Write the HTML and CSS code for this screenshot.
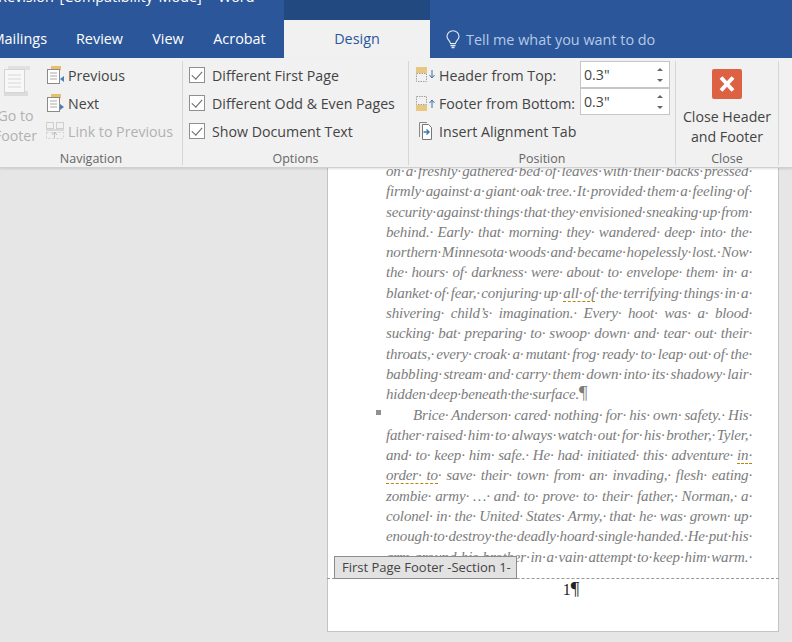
FILE: index.html
```html
<!DOCTYPE html>
<html lang="en">
<head>
    <meta charset="UTF-8">
    <title>Header and Footer Tools</title>
    <link rel="stylesheet" href="styles.css">
</head>
<body>
    <div class="titlebar">
        <div class="doc-title">Revision [Compatibility Mode] - Word</div>
        <div class="tool-title"><span>Header &amp; Footer Tools</span></div>
    </div>

    <div class="tabs">
        <div class="tab mailings">Mailings</div>
        <div class="tab review">Review</div>
        <div class="tab view">View</div>
        <div class="tab acrobat">Acrobat</div>
        <div class="tab design">Design</div>
        <div class="tell-me">
            <svg width="16" height="19" viewBox="0 0 16 19" fill="none" stroke="#e4ebf5" stroke-width="1.1">
                <path d="M5.5 13.5 C5 10.5 2 9.5 2 6.5 A6 5.8 0 0 1 14 6.5 C14 9.5 11 10.5 10.5 13.5 Z"/>
                <path d="M5.5 15.5 H10.5 M6.5 17.5 H9.5" stroke-width="1.4"/>
            </svg>
            <span>Tell me what you want to do</span>
        </div>
    </div>

    <div class="ribbon">
        <div class="group nav-group">
            <div class="group-body nav-body">
                <div class="big-btn off">
                    <svg width="34" height="36" viewBox="0 0 34 36" fill="none">
                        <rect x="9" y="2" width="22" height="4" fill="#e0e0e0"/>
                        <rect x="5" y="27" width="24" height="5" fill="#dcdcdc"/>
                        <rect x="5.5" y="5.5" width="20" height="23" fill="#f8f8f8" stroke="#d4d4d4"/>
                        <path d="M9 11H22M9 15H22M9 19H22M9 23H22" stroke="#d8d8d8"/>
                    </svg>
                    <span>Go to<br>Footer</span>
                </div>
                <div class="nav-list">
                    <div class="nav-item">
                        <svg width="18" height="20" viewBox="0 0 18 20" fill="none">
                            <rect x="5" y="1" width="10" height="4" fill="#e8bf6a"/>
                            <rect x="1.5" y="4.5" width="12" height="14" fill="#fff" stroke="#8a8a8a"/>
                            <path d="M4 8H11M4 11H11M4 14H11" stroke="#a8a8a8"/>
                            <path d="M18 11V17L14 14Z" fill="#4a7fb5"/>
                        </svg>
                        <span>Previous</span>
                    </div>
                    <div class="nav-item">
                        <svg width="18" height="20" viewBox="0 0 18 20" fill="none">
                            <rect x="5" y="1" width="10" height="4" fill="#e8bf6a"/>
                            <rect x="1.5" y="4.5" width="12" height="14" fill="#fff" stroke="#8a8a8a"/>
                            <path d="M4 8H11M4 11H11M4 14H11" stroke="#a8a8a8"/>
                            <path d="M14 11V17L18 14Z" fill="#4a7fb5"/>
                        </svg>
                        <span>Next</span>
                    </div>
                    <div class="nav-item off">
                        <svg width="18" height="20" viewBox="0 0 18 20" fill="none" stroke="#cfcfcf">
                            <rect x="0.5" y="1.5" width="7" height="6"/>
                            <rect x="10.5" y="1.5" width="7" height="6"/>
                            <path d="M0 9H18" stroke-width="2" stroke="#d8d8d8"/>
                            <rect x="0.5" y="11.5" width="17" height="6" stroke-dasharray="2 2"/>
                            <path d="M6 14L8.5 11L11 14M8.5 11V17" stroke="#bdbdbd"/>
                        </svg>
                        <span>Link to Previous</span>
                    </div>
                </div>
            </div>
            <div class="group-name">Navigation</div>
        </div>

        <div class="group options-group">
            <div class="group-body options-body">
                <label class="check"><span class="box"></span>Different First Page</label>
                <label class="check"><span class="box"></span>Different Odd &amp; Even Pages</label>
                <label class="check"><span class="box"></span>Show Document Text</label>
            </div>
            <div class="group-name">Options</div>
        </div>

        <div class="group position-group">
            <div class="group-body position-body">
                <div class="pos-labels">
                    <div class="pos-item">
                        <svg width="20" height="16" viewBox="0 0 20 16" fill="none">
                            <rect x="0" y="0" width="11" height="6" fill="#e8c77f"/>
                            <rect x="0.5" y="6.5" width="10" height="8" stroke="#a0a0a0" stroke-dasharray="1.5 1"/>
                            <path d="M16 3V10M13.5 8L16 11L18.5 8" stroke="#3f6f9f"/>
                        </svg>
                        <span>Header from Top:</span>
                    </div>
                    <div class="pos-item">
                        <svg width="20" height="16" viewBox="0 0 20 16" fill="none">
                            <rect x="0.5" y="1.5" width="10" height="8" stroke="#a0a0a0" stroke-dasharray="1.5 1"/>
                            <rect x="0" y="10" width="11" height="6" fill="#e8c77f"/>
                            <path d="M16 13V6M13.5 8L16 5L18.5 8" stroke="#3f6f9f"/>
                        </svg>
                        <span>Footer from Bottom:</span>
                    </div>
                    <div class="pos-item">
                        <svg width="20" height="20" viewBox="0 0 20 20" fill="none">
                            <path d="M3.5 16V1.5H11" stroke="#8a8a8a"/>
                            <path d="M6.5 3.5H12.5L15.5 6.5V18.5H6.5Z" fill="#fff" stroke="#777"/>
                            <path d="M7.5 11H12.5M10.5 8.5L13 11L10.5 13.5" stroke="#3a78b5" stroke-width="1.4"/>
                        </svg>
                        <span>Insert Alignment Tab</span>
                    </div>
                </div>
                <div class="spinners">
                    <div class="spinner"><span>0.3"</span><span class="arrows"><i class="up"></i><i class="down"></i></span></div>
                    <div class="spinner"><span>0.3"</span><span class="arrows"><i class="up"></i><i class="down"></i></span></div>
                </div>
            </div>
            <div class="group-name">Position</div>
        </div>

        <div class="group close-group">
            <div class="group-body close-body">
                <svg class="close-icon" width="30" height="30" viewBox="0 0 30 30">
                    <rect width="30" height="30" rx="2" fill="#dd6143"/>
                    <path d="M9 8.5L21 21.5M21 8.5L9 21.5" stroke="#fff" stroke-width="4"/>
                </svg>
                <span>Close Header<br>and Footer</span>
            </div>
            <div class="group-name">Close</div>
        </div>
    </div>

    <div class="workspace">
        <div class="page">
            <div class="body-text">
                <div class="line">on· a· freshly· gathered· bed· of· leaves· with· their· backs· pressed·</div>
                <div class="line">firmly· against· a· giant· oak· tree.· It· provided· them· a· feeling· of·</div>
                <div class="line">security· against· things· that· they· envisioned· sneaking· up· from·</div>
                <div class="line">behind.· Early· that· morning· they· wandered· deep· into· the·</div>
                <div class="line">northern· Minnesota· woods· and· became· hopelessly· lost.· Now·</div>
                <div class="line">the· hours· of· darkness· were· about· to· envelope· them· in· a·</div>
                <div class="line">blanket· of· fear,· conjuring· up· <span class="squiggle">all· of</span>· the· terrifying· things· in· a·</div>
                <div class="line">shivering· child’s· imagination.· Every· hoot· was· a· blood·</div>
                <div class="line">sucking· bat· preparing· to· swoop· down· and· tear· out· their·</div>
                <div class="line">throats,· every· croak· a· mutant· frog· ready· to· leap· out· of· the·</div>
                <div class="line">babbling· stream· and· carry· them· down· into· its· shadowy· lair·</div>
                <div class="line last">hidden· deep· beneath· the· surface.<span class="pilcrow">¶</span></div>
                <div class="line first"><span class="bullet"></span>Brice· Anderson· cared· nothing· for· his· own· safety.· His·</div>
                <div class="line">father· raised· him· to· always· watch· out· for· his· brother,· Tyler,·</div>
                <div class="line">and· to· keep· him· safe.· He· had· initiated· this· adventure· <span class="squiggle">in·</span></div>
                <div class="line"><span class="squiggle">order· to</span>· save· their· town· from· an· invading,· flesh· eating·</div>
                <div class="line">zombie· army· …· and· to· prove· to· their· father,· Norman,· a·</div>
                <div class="line">colonel· in· the· United· States· Army,· that· he· was· grown· up·</div>
                <div class="line">enough· to· destroy· the· deadly· hoard· single· handed.· He· put· his·</div>
                <div class="line">arm· around· his· brother· in· a· vain· attempt· to· keep· him· warm.·</div>
            </div>
            <div class="footer-area">
                <div class="footer-tag">First Page Footer -Section 1-</div>
                <div class="page-num">1<span class="pilcrow">¶</span></div>
            </div>
        </div>
    </div>
</body>
</html>
```

FILE: styles.css
```css
* {
    box-sizing: border-box;
}

html, body {
    margin: 0;
    height: 100%;
}

body {
    width: 792px;
    height: 642px;
    overflow: hidden;
    display: flex;
    flex-direction: column;
    font-family: "Open Sans", "Noto Sans", sans-serif;
    font-size: 14.4px;
    color: #444;
    background: #e6e6e6;
}

.titlebar {
    height: 20px;
    flex: none;
    display: flex;
    background: #2b579a;
    color: #fff;
    overflow: hidden;
}

.doc-title {
    width: 284px;
    flex: none;
    text-indent: -2px;
    word-spacing: 2px;
    margin-top: -13px;
    white-space: nowrap;
    overflow: hidden;
}

.tool-title {
    width: 146px;
    flex: none;
    background: #234a80;
    color: #d5deec;
    text-align: center;
    font-size: 13px;
}

.tool-title span {
    display: block;
    margin-top: -15px;
}

.tabs {
    height: 38px;
    flex: none;
    display: flex;
    align-items: center;
    background: #2b579a;
    color: #fff;
    overflow: hidden;
}

.tab {
    flex: none;
    text-align: center;
    line-height: 38px;
}

.mailings {
    width: 58px;
    padding-right: 11px;
    display: flex;
    justify-content: flex-end;
    white-space: nowrap;
}
.review { width: 83px; }
.view { width: 54px; }
.acrobat { width: 89px; }

.design {
    width: 146px;
    height: 38px;
    background: #f1f1f1;
    color: #2b579a;
}

.tell-me {
    display: flex;
    align-items: center;
    gap: 5px;
    margin-left: 15px;
    color: #b5c9e6;
}

.ribbon {
    height: 110px;
    flex: none;
    display: flex;
    font-size: 14.2px;
    background: #f1f1f1;
    border-bottom: 1px solid #d0d0d0;
    box-shadow: 0 1px 2px rgba(0, 0, 0, 0.12);
    position: relative;
    z-index: 2;
}

.group {
    flex: none;
    display: flex;
    flex-direction: column;
    border-right: 1px solid #d6d6d6;
    margin: 3px 0 2px;
}

.group-body {
    flex: 1;
    min-height: 0;
}

.group-name {
    height: 15px;
    text-align: center;
    font-size: 12.5px;
    color: #666;
    line-height: 18px;
}

.nav-group { width: 183px; }
.options-group { width: 226px; }
.position-group { width: 267px; }
.close-group { width: 103px; }

.nav-body {
    display: flex;
    overflow: hidden;
}

.big-btn {
    width: 45px;
    flex: none;
    display: flex;
    flex-direction: column;
    align-items: center;
    margin-left: -7px;
    padding-top: 3px;
    line-height: 20px;
    text-align: center;
    white-space: nowrap;
}

.big-btn span { margin-top: 6px; }

.off { color: #b1b1b1; }

.nav-list {
    padding-left: 8px;
}

.nav-item {
    display: flex;
    align-items: center;
    gap: 4px;
    height: 28px;
    white-space: nowrap;
}

.options-body {
    padding-left: 6px;
}

.check {
    display: flex;
    align-items: center;
    gap: 7px;
    height: 28px;
    white-space: nowrap;
}

.box {
    width: 16px;
    height: 16px;
    border: 1px solid #8f8f8f;
    background: #fff;
    position: relative;
}

.box::after {
    content: "";
    position: absolute;
    left: 4px;
    top: 1px;
    width: 5px;
    height: 9px;
    border: solid #666;
    border-width: 0 1.5px 1.5px 0;
    transform: rotate(42deg);
}

.position-body {
    display: flex;
    padding-left: 7px;
}

.pos-labels {
    width: 164px;
}

.pos-item {
    display: flex;
    align-items: center;
    gap: 3px;
    height: 28px;
    white-space: nowrap;
}

.spinner {
    width: 90px;
    height: 27px;
    display: flex;
    justify-content: space-between;
    align-items: center;
    padding-left: 3px;
    background: #fff;
    border: 1px solid #c6c6c6;
}

.arrows {
    display: flex;
    flex-direction: column;
    gap: 8px;
    margin-right: 6px;
}

.arrows i {
    width: 0;
    height: 0;
    border: 3px solid transparent;
    border-top: 0;
    border-bottom: 3px solid #666;
}

.arrows .down {
    border-bottom: 0;
    border-top: 3px solid #666;
}

.close-body {
    display: flex;
    flex-direction: column;
    align-items: center;
    text-align: center;
    line-height: 20px;
    padding-top: 8px;
}

.close-icon { margin-bottom: 8px; }

.workspace {
    flex: 1;
    min-height: 0;
    overflow: hidden;
    padding-left: 327px;
}

.page {
    width: 452px;
    height: 464px;
    background: #fff;
    border: 1px solid #c4c4c4;
    border-top: 0;
    display: flex;
    flex-direction: column;
}

/* spaces collapse to nothing so justify only opens the gaps after each dot */
.body-text {
    height: 410px;
    flex: none;
    overflow: hidden;
    padding: 0 26px 0 58px;
    font: italic 15px/20.3px "Liberation Serif", serif;
    letter-spacing: -0.15px;
    word-spacing: -3.6px;
    color: #7c7c7c;
}

.line {
    height: 20.3px;
    text-align: justify;
    text-align-last: justify;
    white-space: nowrap;
    position: relative;
    top: -7px;
}

.line.last { text-align-last: left; }
.line.first { padding-left: 27px; }

.bullet {
    position: absolute;
    left: -10px;
    top: 5px;
    width: 5px;
    height: 5px;
    background: #909090;
}

.pilcrow {
    font-style: normal;
    font-size: 19px;
    line-height: 0;
}

.squiggle {
    border-bottom: 1px dashed #b8860b;
}

.footer-area {
    flex: 1;
    position: relative;
    border-top: 1px dashed #999;
    margin: 0 -1px;
}

.footer-tag {
    position: absolute;
    left: 7px;
    bottom: 100%;
    width: 183px;
    height: 23px;
    background: #e2e2e2;
    border: 1px solid #8c8c8c;
    font-size: 13px;
    line-height: 21px;
    padding-left: 7px;
    white-space: nowrap;
}

.page-num {
    text-align: center;
    padding-left: 36px;
    font: 16px/22px "Liberation Serif", serif;
    color: #222;
}
```
